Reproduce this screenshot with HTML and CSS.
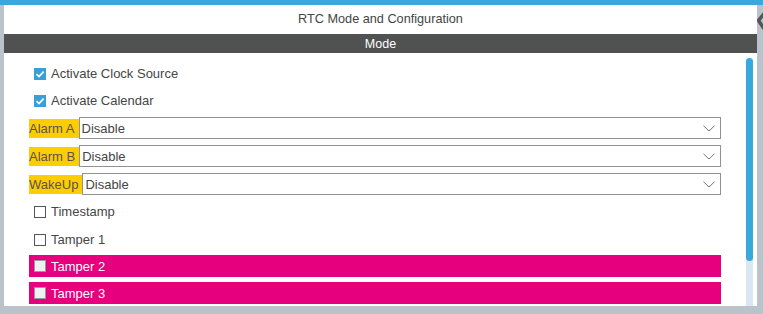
FILE: index.html
```html
<!DOCTYPE html>
<html>
<head>
<meta charset="utf-8">
<link rel="stylesheet" href="styles.css">
</head>
<body>
<div class="app">
  <div class="topbar"></div>
  <div class="main">
    <div class="leftstrip"></div>
    <div class="panel">
      <div class="title">RTC Mode and Configuration</div>
      <div class="modebar">Mode</div>
      <div class="content">
        <div class="list">
          <div class="row chk-row first">
            <span class="cb checked"><svg viewBox="0 0 12 12" width="12" height="12"><polyline points="2.5,6.2 5,8.6 9.6,3.6" fill="none" stroke="#fff" stroke-width="1.6"/></svg></span>
            <span class="lbl">Activate Clock Source</span>
          </div>
          <div class="row chk-row">
            <span class="cb checked"><svg viewBox="0 0 12 12" width="12" height="12"><polyline points="2.5,6.2 5,8.6 9.6,3.6" fill="none" stroke="#fff" stroke-width="1.6"/></svg></span>
            <span class="lbl">Activate Calendar</span>
          </div>
          <div class="row sel-row">
            <span class="tag">Alarm A</span>
            <div class="select"><span>Disable</span><svg class="chev" viewBox="0 0 12 7" width="12" height="7"><polyline points="0.5,0.8 6,6 11.5,0.8" fill="none" stroke="#777" stroke-width="1"/></svg></div>
          </div>
          <div class="row sel-row">
            <span class="tag">Alarm B</span>
            <div class="select"><span>Disable</span><svg class="chev" viewBox="0 0 12 7" width="12" height="7"><polyline points="0.5,0.8 6,6 11.5,0.8" fill="none" stroke="#777" stroke-width="1"/></svg></div>
          </div>
          <div class="row sel-row">
            <span class="tag">WakeUp</span>
            <div class="select"><span>Disable</span><svg class="chev" viewBox="0 0 12 7" width="12" height="7"><polyline points="0.5,0.8 6,6 11.5,0.8" fill="none" stroke="#777" stroke-width="1"/></svg></div>
          </div>
          <div class="row chk-row tall">
            <span class="cb"></span>
            <span class="lbl">Timestamp</span>
          </div>
          <div class="row chk-row">
            <span class="cb"></span>
            <span class="lbl">Tamper 1</span>
          </div>
          <div class="row pink first-pink">
            <span class="cb grey"></span>
            <span class="lbl">Tamper 2</span>
          </div>
          <div class="row pink">
            <span class="cb grey"></span>
            <span class="lbl">Tamper 3</span>
          </div>
        </div>
        <div class="scroll">
          <div class="track"><div class="thumb"></div></div>
        </div>
      </div>
    </div>
    <div class="rightstrip">
      <svg viewBox="0 0 6 36" width="6" height="36"><polyline points="10,3 1.5,13.5 10,26" fill="none" stroke="#555" stroke-width="3.5"/></svg>
    </div>
  </div>
</div>
</body>
</html>
```
FILE: styles.css
```css
* { box-sizing: border-box; }
html, body { margin: 0; padding: 0; }
body {
  width: 763px;
  height: 314px;
  overflow: hidden;
  background: #b9c3c9;
  font-family: "Liberation Sans", Arial, sans-serif;
  color: #454545;
}
.app { display: flex; flex-direction: column; height: 314px; }
.topbar { height: 5px; background: #39a8dc; flex: none; }
.main { display: flex; height: 301px; flex: none; }
.leftstrip { width: 4px; background: #b9c3c9; flex: none; }
.rightstrip { width: 6px; background: #b9c3c9; flex: none; overflow: hidden; padding-top: 2px; }
.rightstrip svg { display: block; }
.panel { width: 753px; background: #fff; display: flex; flex-direction: column; }
.title {
  height: 29px;
  display: flex; align-items: center; justify-content: center;
  font-size: 12.7px; color: #444;
  padding-bottom: 1px;
}
.modebar {
  height: 19px;
  background: #505251;
  color: #fff;
  font-size: 12.5px;
  display: flex; align-items: center; justify-content: center;
}
.content { flex: 1; display: flex; min-height: 0; }
.list { width: 717px; padding-left: 25px; padding-top: 7px; display: flex; flex-direction: column; }
.row { display: flex; align-items: center; font-size: 13px; flex: none; }
.chk-row { height: 27px; padding-left: 5px; }
.chk-row.tall { height: 27px; margin-bottom: 1px; }
.cb {
  width: 12px; height: 12px;
  border: 1px solid #555;
  background: #fff;
  flex: none;
  margin-right: 5px;
  display: block;
}
.cb.checked { background: #3a9fd8; border-color: #3a9fd8; }
.cb.checked svg { display: block; margin: -1px; }
.cb.grey { background: #eef0f2; border-color: #9a9a9a; }
.lbl { line-height: 15px; }
.sel-row { height: 22px; margin: 3px 0; }
.tag {
  background: #fecd00;
  color: #555;
  height: 19px;
  line-height: 19px;
  padding-right: 4px;
  flex: none;
}
.select {
  flex: 1;
  height: 22px;
  border: 1px solid #8f9396;
  display: flex; align-items: center; justify-content: space-between;
  padding-left: 2px; padding-right: 5px;
  color: #444;
}
.chev { display: block; margin-top: 1px; }
.pink {
  height: 22px;
  background: #e6007e;
  color: #fff;
  padding-left: 5px;
  margin-top: 2px;
}
.pink + .pink { margin-top: 5px; }
.scroll { width: 7px; margin-left: 25px; padding-top: 5px; padding-bottom: 0; display: flex; }
.track { flex: 1; background: #d9e6f4; border-radius: 4px 4px 0 0; }
.thumb { height: 203px; background: #39a8dc; border-radius: 4px; }
```
